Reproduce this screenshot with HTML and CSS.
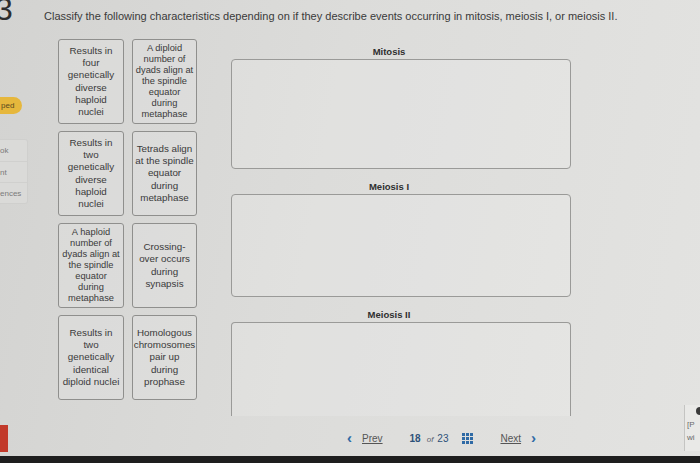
FILE: index.html
```html
<!DOCTYPE html>
<html>
<head>
<meta charset="utf-8">
<link rel="stylesheet" href="styles.css">
</head>
<body>
<div class="screen">
  <div class="page">
    <aside class="sidebar">
      <div class="qnum">3</div>
      <div class="pill">ped</div>
      <ul class="side-menu">
        <li>ok</li>
        <li>nt</li>
        <li>ences</li>
      </ul>
      <div class="side-flag"></div>
    </aside>
    <main class="content">
      <p class="prompt">Classify the following characteristics depending on if they describe events occurring in mitosis, meiosis I, or meiosis II.</p>
      <div class="workspace">
        <div class="cards">
          <div class="card"><span>Results in<br>four<br>genetically<br>diverse<br>haploid<br>nuclei</span></div>
          <div class="card card-dense"><span>A diploid<br>number of<br>dyads align at<br>the spindle<br>equator<br>during<br>metaphase</span></div>
          <div class="card"><span>Results in<br>two<br>genetically<br>diverse<br>haploid<br>nuclei</span></div>
          <div class="card"><span>Tetrads align<br>at the spindle<br>equator<br>during<br>metaphase</span></div>
          <div class="card card-dense"><span>A haploid<br>number of<br>dyads align at<br>the spindle<br>equator<br>during<br>metaphase</span></div>
          <div class="card"><span>Crossing-<br>over occurs<br>during<br>synapsis</span></div>
          <div class="card"><span>Results in<br>two<br>genetically<br>identical<br>diploid nuclei</span></div>
          <div class="card"><span>Homologous<br>chromosomes<br>pair up<br>during<br>prophase</span></div>
        </div>
        <div class="zones">
          <section class="zone">
            <h3 class="zone-label">Mitosis</h3>
            <div class="drop drop-1"></div>
          </section>
          <section class="zone">
            <h3 class="zone-label">Meiosis I</h3>
            <div class="drop drop-2"></div>
          </section>
          <section class="zone">
            <h3 class="zone-label">Meiosis II</h3>
            <div class="drop drop-3"></div>
          </section>
        </div>
      </div>
      <nav class="pager">
        <a class="pager-link pager-prev"><span class="chev">&#8249;</span><span class="pager-text">Prev</span></a>
        <div class="pager-count"><b>18</b><span class="of">of</span><span class="total">23</span></div>
        <span class="grid-icon"><i></i><i></i><i></i><i></i><i></i><i></i><i></i><i></i><i></i></span>
        <a class="pager-link pager-next"><span class="pager-text">Next</span><span class="chev">&#8250;</span></a>
      </nav>
    </main>
  </div>
  <div class="taskbar"></div>
  <div class="help-panel">
    <span class="help-dot"></span>
    <span class="help-line">[P</span>
    <span class="help-line">wi</span>
  </div>
</div>
</body>
</html>
```

FILE: styles.css
```css
* { box-sizing: border-box; }
html, body { margin: 0; padding: 0; }
body {
  width: 700px;
  height: 463px;
  overflow: hidden;
  font-family: "Liberation Sans", Arial, sans-serif;
  color: #333;
}
.screen {
  position: relative;
  width: 700px;
  height: 463px;
  display: flex;
  flex-direction: column;
  background: linear-gradient(100deg, #d3d3d1 0%, #dcdcda 45%, #e3e3e1 100%);
  overflow: hidden;
}
.page {
  flex: 1;
  display: flex;
  min-height: 0;
}
.sidebar {
  width: 30px;
  flex: none;
  display: flex;
  flex-direction: column;
}
.qnum {
  font-size: 32px;
  line-height: 30px;
  margin: -6px 0 0 -5px;
  color: #2e2e2e;
  height: 30px;
}
.pill {
  margin-top: 73px;
  width: 22px;
  height: 17px;
  background: #e6b73c;
  border-radius: 0 9px 9px 0;
  font-size: 8px;
  line-height: 17px;
  color: #5b4a1e;
  padding-left: 1px;
}
.side-menu {
  list-style: none;
  margin: 25px 0 0 0;
  padding: 0;
  width: 28px;
  border: 1px solid #cfcfcd;
  border-left: none;
  border-radius: 0 3px 3px 0;
  background: #dadad8;
}
.side-menu li {
  height: 21px;
  line-height: 21px;
  font-size: 8px;
  color: #7b7b7b;
  border-top: 1px solid #d0d0ce;
}
.side-menu li:first-child { border-top: none; }
.side-flag {
  margin-top: auto;
  margin-bottom: 4px;
  width: 8px;
  height: 27px;
  background: #c23a2b;
}
.content {
  flex: 1;
  display: flex;
  flex-direction: column;
  padding-left: 14px;
  min-width: 0;
}
.prompt {
  margin: 0;
  padding-top: 9px;
  font-size: 11px;
  line-height: 14px;
  color: #3a3a3a;
  white-space: nowrap;
}
.workspace {
  display: flex;
  margin-top: 16px;
  align-items: flex-start;
}
.cards {
  margin-left: 14px;
  display: grid;
  grid-template-columns: 66px 65px;
  grid-auto-rows: 85px;
  column-gap: 8px;
  row-gap: 7px;
}
.card {
  border: 1px solid #8f8f8d;
  border-radius: 3px;
  background: rgba(255, 255, 255, 0.12);
  display: flex;
  align-items: center;
  justify-content: center;
  text-align: center;
  font-size: 9.8px;
  line-height: 12.2px;
  color: #3a3a3a;
  white-space: nowrap;
}
.card-dense { line-height: 11px; font-size: 9.3px; }
.zones {
  margin-left: 34px;
  width: 340px;
  padding-top: 7px;
  display: flex;
  flex-direction: column;
  gap: 12px;
}
.zone-label {
  margin: 0 0 1px 0;
  font-size: 9.5px;
  line-height: 12px;
  font-weight: bold;
  text-align: center;
  color: #2f2f2f;
  padding-right: 24px;
}
.drop {
  border: 1px solid #9a9a98;
  border-radius: 4px;
  background: rgba(255, 255, 255, 0.14);
}
.drop-1 { height: 110px; }
.drop-2 { height: 103px; }
.drop-3 {
  height: 94px;
  border-bottom: none;
  border-radius: 4px 4px 0 0;
}
.pager {
  margin-top: auto;
  margin-bottom: 8px;
  margin-left: 303px;
  height: 20px;
  display: flex;
  align-items: center;
  font-size: 10px;
}
.pager-link {
  display: flex;
  align-items: center;
  color: #555;
}
.chev {
  color: #2f6aa5;
  font-weight: bold;
  font-size: 15px;
  line-height: 15px;
  position: relative;
  top: -1px;
}
.pager-prev .chev { margin-right: 10px; }
.pager-next .chev { margin-left: 10px; }
.pager-text {
  text-decoration: underline;
  color: #555;
}
.pager-count {
  margin-left: 27px;
  display: flex;
  align-items: baseline;
  color: #2d5179;
}
.pager-count b { font-weight: bold; }
.pager-count .of {
  font-size: 8px;
  color: #5a6070;
  margin: 0 4px 0 6px;
  font-style: italic;
}
.grid-icon {
  margin-left: 14px;
  width: 11px;
  height: 11px;
  display: grid;
  grid-template-columns: repeat(3, 3px);
  grid-auto-rows: 3px;
  gap: 1px;
}
.grid-icon i {
  display: block;
  background: #2f6aa5;
}
.pager-next { margin-left: 27px; }
.taskbar {
  height: 7px;
  flex: none;
  background: #1e1e1e;
}
.help-panel {
  position: absolute;
  right: 0;
  top: 405px;
  width: 16px;
  height: 46px;
  background: #e9e9e7;
  border-left: 1px solid #c4c4c2;
  display: flex;
  flex-direction: column;
  padding: 2px 0 0 2px;
  font-size: 8px;
  line-height: 13px;
  color: #6a6a6a;
  overflow: hidden;
}
.help-dot {
  width: 8px;
  height: 8px;
  border-radius: 50%;
  background: #3a3a3a;
  margin-left: 9px;
  margin-bottom: 3px;
}
.help-line { white-space: nowrap; }
```
